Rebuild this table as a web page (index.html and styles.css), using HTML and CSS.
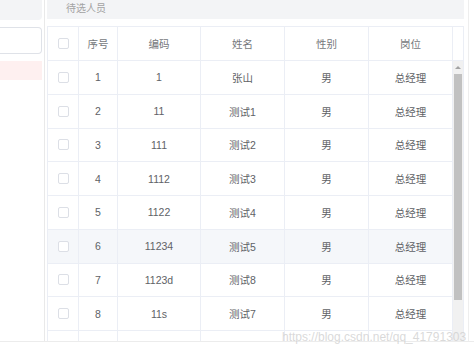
FILE: index.html
```html
<!DOCTYPE html>
<html lang="zh-CN">
<head>
<meta charset="utf-8">
<title>待选人员</title>
<link rel="stylesheet" href="styles.css">
</head>
<body>
<div class="screen">
  <div class="main">
    <aside class="side">
      <div class="side-bar"></div>
      <div class="side-input"></div>
      <div class="side-active"></div>
    </aside>
    <section class="panel">
      <div class="panel-title">待选人员</div>
      <div class="table">
        <div class="thead">
          <div class="cell"><span class="checkbox"></span></div>
          <div class="cell">序号</div>
          <div class="cell">编码</div>
          <div class="cell">姓名</div>
          <div class="cell">性别</div>
          <div class="cell">岗位</div>
          <div class="cell gutter"></div>
        </div>
        <div class="tbody">
          <div class="rows">
            <div class="row"><div class="cell"><span class="checkbox"></span></div><div class="cell">1</div><div class="cell">1</div><div class="cell">张山</div><div class="cell">男</div><div class="cell">总经理</div></div>
            <div class="row"><div class="cell"><span class="checkbox"></span></div><div class="cell">2</div><div class="cell">11</div><div class="cell">测试1</div><div class="cell">男</div><div class="cell">总经理</div></div>
            <div class="row"><div class="cell"><span class="checkbox"></span></div><div class="cell">3</div><div class="cell">111</div><div class="cell">测试2</div><div class="cell">男</div><div class="cell">总经理</div></div>
            <div class="row"><div class="cell"><span class="checkbox"></span></div><div class="cell">4</div><div class="cell">1112</div><div class="cell">测试3</div><div class="cell">男</div><div class="cell">总经理</div></div>
            <div class="row"><div class="cell"><span class="checkbox"></span></div><div class="cell">5</div><div class="cell">1122</div><div class="cell">测试4</div><div class="cell">男</div><div class="cell">总经理</div></div>
            <div class="row hover"><div class="cell"><span class="checkbox"></span></div><div class="cell">6</div><div class="cell">11234</div><div class="cell">测试5</div><div class="cell">男</div><div class="cell">总经理</div></div>
            <div class="row"><div class="cell"><span class="checkbox"></span></div><div class="cell">7</div><div class="cell">1123d</div><div class="cell">测试8</div><div class="cell">男</div><div class="cell">总经理</div></div>
            <div class="row"><div class="cell"><span class="checkbox"></span></div><div class="cell">8</div><div class="cell">11s</div><div class="cell">测试7</div><div class="cell">男</div><div class="cell">总经理</div></div>
            <div class="row"><div class="cell"></div><div class="cell"></div><div class="cell"></div><div class="cell"></div><div class="cell"></div><div class="cell"></div></div>
          </div>
          <div class="scrollbar">
            <span class="arrow"></span>
            <span class="thumb"></span>
          </div>
        </div>
      </div>
    </section>
    <div class="edge"></div>
  </div>
  <div class="watermark">https://blog.csdn.net/qq_41791303</div>
</div>
</body>
</html>
```

FILE: styles.css
```css
html, body {
  margin: 0;
  padding: 0;
  background: #fff;
}

body {
  width: 474px;
  height: 352px;
  overflow: hidden;
  font-family: "Liberation Sans", "Noto Sans CJK SC", sans-serif;
  font-size: 10.5px;
  color: #606266;
}

.screen {
  position: relative;
  width: 474px;
  height: 352px;
}

.main {
  display: flex;
  height: 342px;
  box-sizing: border-box;
  border-bottom: 1px solid #ececec;
  overflow: hidden;
}

.side {
  width: 42px;
  padding-right: 2px;
  border-right: 1px solid #e9e9e9;
  display: flex;
  flex-direction: column;
  flex-shrink: 0;
}

.side-bar {
  height: 20px;
  background: #f3f4f6;
  border-radius: 0 0 4px 0;
}

.side-input {
  margin-top: 7px;
  height: 27px;
  box-sizing: border-box;
  border: 1px solid #dfe2e8;
  border-left: none;
  border-radius: 0 4px 4px 0;
  background: #fff;
}

.side-active {
  margin-top: 7px;
  height: 19px;
  background: #fef0f0;
}

.panel {
  margin-left: 2px;
  width: 417px;
  flex-shrink: 0;
  display: flex;
  flex-direction: column;
}

.panel-title {
  height: 19px;
  line-height: 18px;
  padding-left: 19px;
  background: #f3f4f6;
  color: #a3a3a3;
  font-size: 10px;
}

.table {
  margin-top: 7px;
  flex: 1;
  min-height: 0;
  border: 1px solid #ebeef5;
  border-bottom: none;
  display: flex;
  flex-direction: column;
  overflow: hidden;
}

.thead {
  display: grid;
  grid-template-columns: 31px 39px 83px 84px 84px 84px 10px;
  height: 34px;
  flex-shrink: 0;
  color: #76787c;
}

.thead .cell {
  border-bottom: 1px solid #ebeef5;
}

.thead .gutter {
  border-right: none;
}

.tbody {
  flex: 1;
  min-height: 0;
  display: flex;
  overflow: hidden;
}

.rows {
  width: 405px;
  flex-shrink: 0;
}

.row {
  display: grid;
  grid-template-columns: 31px 39px 83px 84px 84px 84px;
  height: 33.75px;
}

.row.hover {
  background: #f5f7fa;
}

.cell {
  box-sizing: border-box;
  border-right: 1px solid #ebeef5;
  border-bottom: 1px solid #ebeef5;
  display: flex;
  align-items: center;
  justify-content: center;
  white-space: nowrap;
}

.checkbox {
  width: 11px;
  height: 11px;
  box-sizing: border-box;
  border: 1px solid #dcdfe6;
  border-radius: 2px;
  background: #fff;
}

.scrollbar {
  width: 10px;
  flex-shrink: 0;
  background: #f1f1f1;
  display: flex;
  flex-direction: column;
  align-items: center;
}

.arrow {
  margin-top: 5px;
  width: 0;
  height: 0;
  border-left: 3px solid transparent;
  border-right: 3px solid transparent;
  border-bottom: 3px solid #a3a3a3;
}

.thumb {
  margin-top: 5px;
  width: 8px;
  height: 226px;
  background: #c1c1c1;
}

.edge {
  margin-left: 4px;
  width: 1px;
  background: #eeeeee;
  flex-shrink: 0;
}

.watermark {
  position: absolute;
  left: 282px;
  top: 330px;
  font-family: "Liberation Sans", sans-serif;
  font-size: 12px;
  color: rgba(205, 205, 205, 0.75);
  white-space: nowrap;
}
```
